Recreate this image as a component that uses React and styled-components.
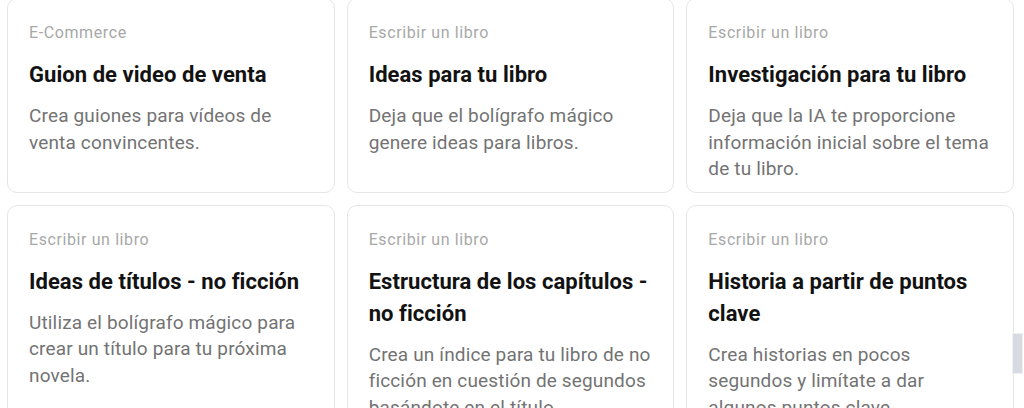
import React from "react";
import styled, { createGlobalStyle } from "styled-components";

const GlobalStyle = createGlobalStyle`
  html, body {
    margin: 0;
    padding: 0;
    background: #ffffff;
  }
  body {
    font-family: Roboto, "Noto Sans", Arial, sans-serif;
    -webkit-font-smoothing: antialiased;
  }
`;

const templates = [
  {
    category: "E-Commerce",
    title: "Guion de video de venta",
    text: "Crea guiones para vídeos de venta convincentes.",
  },
  {
    category: "Escribir un libro",
    title: "Ideas para tu libro",
    text: "Deja que el bolígrafo mágico genere ideas para libros.",
  },
  {
    category: "Escribir un libro",
    title: "Investigación para tu libro",
    text: "Deja que la IA te proporcione información inicial sobre el tema de tu libro.",
  },
  {
    category: "Escribir un libro",
    title: "Ideas de títulos - no ficción",
    text: "Utiliza el bolígrafo mágico para crear un título para tu próxima novela.",
  },
  {
    category: "Escribir un libro",
    title: "Estructura de los capítulos - no ficción",
    text: "Crea un índice para tu libro de no ficción en cuestión de segundos basándote en el título.",
  },
  {
    category: "Escribir un libro",
    title: "Historia a partir de puntos clave",
    text: "Crea historias en pocos segundos y limítate a dar algunos puntos clave.",
  },
];

const App = () => {
  return (
    <>
      <GlobalStyle />
      <Viewport>
        <Grid>
          {templates.map((t, i) => (
            <Card key={i}>
              <Category>{t.category}</Category>
              <Title>{t.title}</Title>
              <Description>{t.text}</Description>
            </Card>
          ))}
        </Grid>
        <ScrollThumb />
      </Viewport>
    </>
  );
};

const Viewport = styled.div`
  position: relative;
  height: 408px;
  overflow: hidden;
  padding: 0 10px 0 7px;
`;

const Grid = styled.div`
  display: grid;
  grid-template-columns: repeat(3, 1fr);
  gap: 12px;
  margin-top: -2px;
`;

const Card = styled.div`
  border: 1px solid #e6e6e6;
  border-radius: 10px;
  padding: 24px 21px 9px;
  background: #ffffff;
  cursor: pointer;
`;

const Category = styled.div`
  font-size: 16px;
  line-height: 20px;
  color: #a8a8a8;
  letter-spacing: 0.6px;
`;

const Title = styled.div`
  margin-top: 16px;
  font-size: 22px;
  line-height: 32px;
  font-weight: 700;
  color: #121212;
  letter-spacing: 0.05px;
`;

const Description = styled.div`
  margin-top: 12px;
  font-size: 19px;
  line-height: 26.6px;
  color: #737373;
  letter-spacing: 0.15px;
`;

const ScrollThumb = styled.div`
  position: absolute;
  right: 2px;
  top: 334px;
  width: 9px;
  height: 39px;
  background: #d7dbe1;
  box-shadow: 0 0 0 1px #eef0f3;
`;

export default App;
